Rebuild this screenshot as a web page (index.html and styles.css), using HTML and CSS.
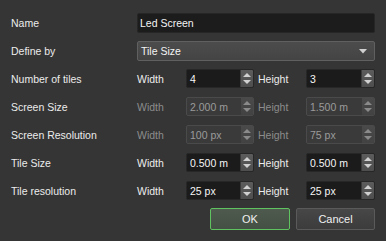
FILE: index.html
```html
<!DOCTYPE html>
<html>
<head>
<meta charset="utf-8">
<link rel="stylesheet" href="styles.css">
</head>
<body>
<div class="dialog">
  <div class="form">
    <div class="label">Name</div>
    <div class="field"><div class="text-input">Led Screen</div></div>

    <div class="label">Define by</div>
    <div class="field">
      <div class="combo">
        <span>Tile Size</span>
        <svg class="combo-arrow" width="8" height="5" viewBox="0 0 8 5"><path d="M0 0H8L4 4.5Z" fill="#d0d0d0"/></svg>
      </div>
    </div>

    <div class="label">Number of tiles</div>
    <div class="field pair">
      <span class="sublabel">Width</span>
      <div class="spin"><span class="val">4</span><div class="btns"><i class="up"></i><i class="down"></i></div></div>
      <span class="sublabel second">Height</span>
      <div class="spin"><span class="val">3</span><div class="btns"><i class="up"></i><i class="down"></i></div></div>
    </div>

    <div class="label">Screen Size</div>
    <div class="field pair disabled">
      <span class="sublabel">Width</span>
      <div class="spin"><span class="val">2.000 m</span><div class="btns"><i class="up"></i><i class="down"></i></div></div>
      <span class="sublabel second">Height</span>
      <div class="spin"><span class="val">1.500 m</span><div class="btns"><i class="up"></i><i class="down"></i></div></div>
    </div>

    <div class="label">Screen Resolution</div>
    <div class="field pair disabled">
      <span class="sublabel">Width</span>
      <div class="spin"><span class="val">100 px</span><div class="btns"><i class="up"></i><i class="down"></i></div></div>
      <span class="sublabel second">Height</span>
      <div class="spin"><span class="val">75 px</span><div class="btns"><i class="up"></i><i class="down"></i></div></div>
    </div>

    <div class="label">Tile Size</div>
    <div class="field pair">
      <span class="sublabel">Width</span>
      <div class="spin"><span class="val">0.500 m</span><div class="btns"><i class="up"></i><i class="down"></i></div></div>
      <span class="sublabel second">Height</span>
      <div class="spin"><span class="val">0.500 m</span><div class="btns"><i class="up"></i><i class="down"></i></div></div>
    </div>

    <div class="label">Tile resolution</div>
    <div class="field pair">
      <span class="sublabel">Width</span>
      <div class="spin"><span class="val">25 px</span><div class="btns"><i class="up"></i><i class="down"></i></div></div>
      <span class="sublabel second">Height</span>
      <div class="spin"><span class="val">25 px</span><div class="btns"><i class="up"></i><i class="down"></i></div></div>
    </div>
  </div>
  <div class="buttons">
    <button class="btn ok">OK</button>
    <button class="btn cancel">Cancel</button>
  </div>
</div>
</body>
</html>
```
FILE: styles.css
```css
html, body {
  margin: 0;
  padding: 0;
  background: #353535;
}
body {
  width: 386px;
  height: 241px;
  overflow: hidden;
  font-family: "Liberation Sans", Arial, sans-serif;
  font-size: 10.5px;
  color: #ececec;
}
.dialog {
  padding: 13px 11px 0 11px;
}
.form {
  display: grid;
  grid-template-columns: 126px 238px;
  grid-auto-rows: 20px;
  row-gap: 8px;
}
.label {
  display: flex;
  align-items: center;
  white-space: nowrap;
}
.field {
  display: flex;
  align-items: stretch;
}
.text-input {
  flex: 1;
  background: #1c1c1c;
  border: 1px solid #262626;
  border-radius: 2px;
  padding-left: 2px;
  display: flex;
  align-items: center;
  color: #f4f4f4;
}
.combo {
  flex: 1;
  background: linear-gradient(#4c4c4c, #444444);
  border: 1px solid #606060;
  border-radius: 2px;
  padding: 0 7px 0 3px;
  display: flex;
  align-items: center;
  justify-content: space-between;
  color: #f4f4f4;
}
.pair {
  display: grid;
  grid-template-columns: 49px 68px 52px 69px;
  align-items: stretch;
}
.sublabel {
  display: flex;
  align-items: center;
  color: #ececec;
}
.sublabel.second {
  padding-left: 4px;
}
.spin {
  display: flex;
  background: #1b1b1b;
  border: 1px solid #272727;
  border-radius: 2px;
  box-sizing: border-box;
  height: 19px;
}
.spin .val {
  flex: 1;
  display: flex;
  align-items: center;
  padding-left: 3px;
  color: #f6f6f6;
}
.btns {
  width: 12px;
  display: flex;
  flex-direction: column;
  justify-content: center;
  align-items: center;
  gap: 3px;
  background: linear-gradient(#5c5c5c, #4e4e4e);
  border-left: 1px solid #3a3a3a;
  border-radius: 0 1px 1px 0;
}
.btns i {
  display: block;
  width: 0;
  height: 0;
  border-left: 4px solid transparent;
  border-right: 4px solid transparent;
}
.btns .up {
  border-bottom: 4px solid #d0d0d0;
}
.btns .down {
  border-top: 4px solid #d0d0d0;
}
.disabled .sublabel {
  color: #8c8c8c;
}
.disabled .spin {
  background: #3a3a3a;
  border-color: #4a4a4a;
}
.disabled .spin .val {
  color: #9a9a9a;
}
.disabled .btns {
  background: linear-gradient(#4a4a4a, #424242);
  border-left-color: #3a3a3a;
}
.disabled .btns .up {
  border-bottom-color: #8a8a8a;
}
.disabled .btns .down {
  border-top-color: #8a8a8a;
}
.buttons {
  display: flex;
  justify-content: flex-end;
  gap: 6px;
  margin-top: 7px;
}
.btn {
  font-family: inherit;
  font-size: 11px;
  height: 22px;
  border-radius: 2px;
  padding: 0;
  color: #f0f0f0;
}
.ok {
  width: 80px;
  background: linear-gradient(#4d5a4d, #455045);
  border: 1px solid #5fc35f;
}
.cancel {
  width: 79px;
  background: linear-gradient(#474747, #3c3c3c);
  border: 1px solid #5a5a5a;
}
```
